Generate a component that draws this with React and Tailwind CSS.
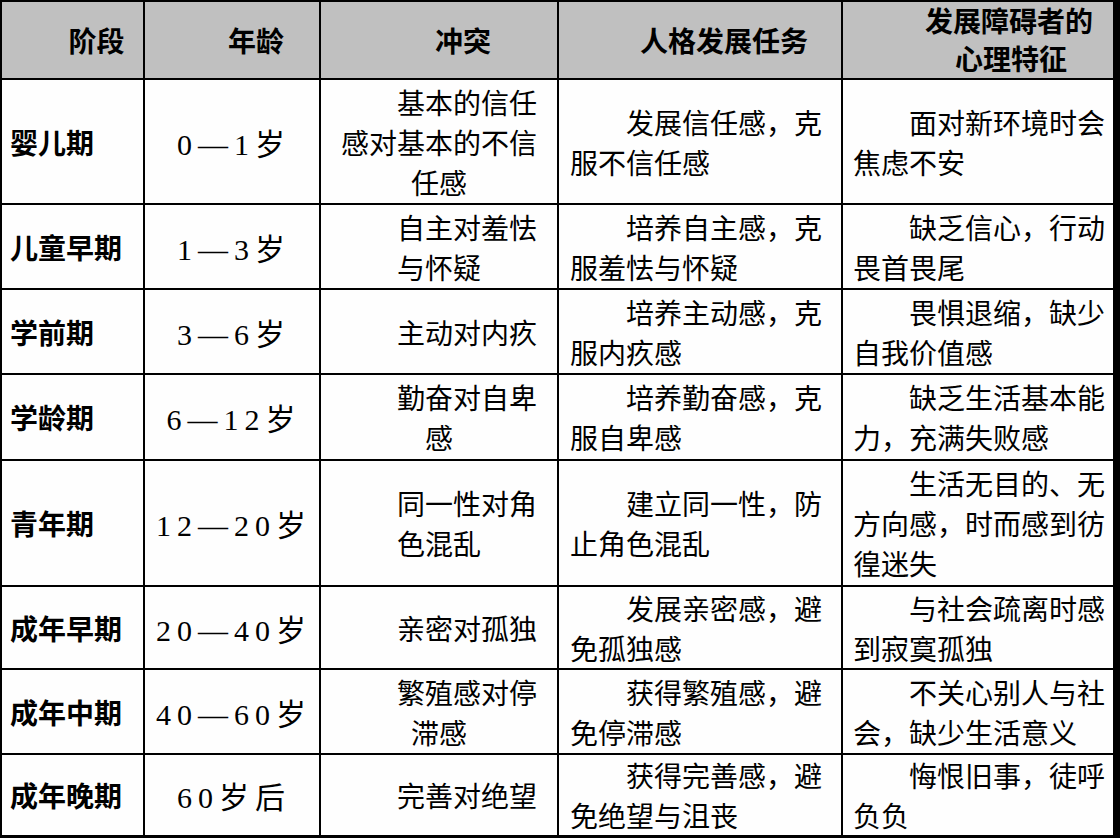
import React from "react";

const rows = [
  { stage: "婴儿期", age: "0—1岁", conflict: "基本的信任感对基本的不信任感", task: "发展信任感，克服不信任感", trait: "面对新环境时会焦虑不安" },
  { stage: "儿童早期", age: "1—3岁", conflict: "自主对羞怯与怀疑", task: "培养自主感，克服羞怯与怀疑", trait: "缺乏信心，行动畏首畏尾" },
  { stage: "学前期", age: "3—6岁", conflict: "主动对内疚", task: "培养主动感，克服内疚感", trait: "畏惧退缩，缺少自我价值感" },
  { stage: "学龄期", age: "6—12岁", conflict: "勤奋对自卑感", task: "培养勤奋感，克服自卑感", trait: "缺乏生活基本能力，充满失败感" },
  { stage: "青年期", age: "12—20岁", conflict: "同一性对角色混乱", task: "建立同一性，防止角色混乱", trait: "生活无目的、无方向感，时而感到彷徨迷失" },
  { stage: "成年早期", age: "20—40岁", conflict: "亲密对孤独", task: "发展亲密感，避免孤独感", trait: "与社会疏离时感到寂寞孤独" },
  { stage: "成年中期", age: "40—60岁", conflict: "繁殖感对停滞感", task: "获得繁殖感，避免停滞感", trait: "不关心别人与社会，缺少生活意义" },
  { stage: "成年晚期", age: "60岁后", conflict: "完善对绝望", task: "获得完善感，避免绝望与沮丧", trait: "悔恨旧事，徒呼负负" },
];

const head = "bg-[#c0c0c0] flex items-center justify-center text-center indent-[2em] pr-[8px] font-bold text-[28px] leading-[38px] text-black";

export default function App() {
  return (
    <div className="w-[1120px] h-[838px] bg-black pt-[2px] pl-[2px] pr-[7px] pb-[3px] font-['Noto_Sans_CJK_SC',sans-serif] text-black">
      <div className="grid grid-cols-[141px_174px_236px_282px_270px] grid-rows-[76px_123px_83px_83px_84px_124px_81px_83px_80px] gap-[2px] h-full">
        <div className={head}><div className="w-full">阶段</div></div>
        <div className={head}><div className="w-full">年龄</div></div>
        <div className={head}><div className="w-full">冲突</div></div>
        <div className={head}><div className="w-full">人格发展任务</div></div>
        <div className="bg-[#c0c0c0] flex flex-col justify-center pb-[2px] font-bold text-[28px] leading-[38px]">
          <div className="pl-[82px] whitespace-nowrap">发展障碍者的</div>
          <div className="pl-[112px] whitespace-nowrap">心理特征</div>
        </div>

        {rows.map((r) => (
          <React.Fragment key={r.stage}>
            <div className="bg-[#fefefe] flex items-center pl-[8px] font-bold text-[28px] leading-[40px]">
              {r.stage}
            </div>
            <div className="bg-[#fefefe] flex items-center justify-center pt-[6px] pl-[4px] font-['Liberation_Serif','Noto_Sans_CJK_SC',serif] text-[30px] leading-[40px] tracking-[6px] whitespace-nowrap">
              {r.age}
            </div>
            <div className="bg-[#fefefe] flex items-center px-[11px] text-[28px] leading-[40px]">
              <div className="w-full text-center indent-[2em]">{r.conflict}</div>
            </div>
            <div className="bg-[#fefefe] flex items-center pl-[11px] pr-[11px] text-[28px] leading-[40px]">
              <div className="w-full indent-[2em]">{r.task}</div>
            </div>
            <div className="bg-[#fefefe] flex items-center pl-[10px] pr-[6px] text-[28px] leading-[40px]">
              <div className="w-full indent-[2em]">{r.trait}</div>
            </div>
          </React.Fragment>
        ))}
      </div>
    </div>
  );
}
